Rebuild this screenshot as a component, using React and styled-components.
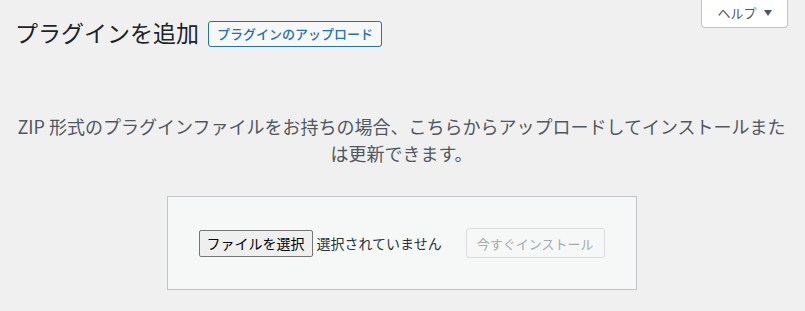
import styled, { createGlobalStyle } from 'styled-components';

const GlobalStyle = createGlobalStyle`
  html, body {
    margin: 0;
    padding: 0;
    background: #f0f0f1;
  }
  body {
    font-family: 'Noto Sans CJK JP', 'Noto Sans', sans-serif;
    color: #3c434a;
  }
`;

const Page = styled.div`
  width: 805px;
  height: 311px;
  overflow: hidden;
  box-sizing: border-box;
  padding: 0 17px 0 15px;
`;

const HelpTab = styled.button`
  float: right;
  width: 87px;
  height: 29px;
  margin-top: -1px;
  background: #fff;
  border: 1px solid #c3c4c7;
  border-top: none;
  border-radius: 0 0 4px 4px;
  font-family: inherit;
  font-size: 13px;
  color: #50575e;
  display: flex;
  align-items: center;
  justify-content: center;
  gap: 7px;
  padding: 0 0 2px;
  cursor: pointer;
`;

const Caret = styled.span`
  width: 0;
  height: 0;
  border-left: 4px solid transparent;
  border-right: 4px solid transparent;
  border-top: 6px solid #50575e;
  margin-top: 1px;
`;

const Header = styled.div`
  display: flex;
  align-items: center;
  gap: 9px;
  padding-top: 17px;
`;

const Title = styled.h1`
  margin: 0;
  font-size: 23px;
  font-weight: 400;
  line-height: 30px;
  color: #1d2327;
`;

const ActionButton = styled.button`
  height: 26px;
  margin-top: 3px;
  padding: 0 8px;
  border: 1px solid #2271b1;
  border-radius: 3px;
  background: #f6f7f7;
  color: #2271b1;
  font-family: inherit;
  font-size: 13px;
  font-weight: 500;
  cursor: pointer;
`;

const Help = styled.p`
  clear: both;
  margin: 66px 0 0;
  padding: 0;
  font-size: 18px;
  line-height: 27px;
  color: #50575e;
  text-align: center;
`;

const UploadForm = styled.form`
  width: 470px;
  box-sizing: border-box;
  margin: 29px auto 0;
  padding: 31px;
  border: 1px solid #c3c4c7;
  background: #f6f7f7;
  display: flex;
  align-items: center;
`;

const FileButton = styled.button`
  height: 27px;
  padding: 0 7px;
  border: 1px solid #767676;
  border-radius: 2px;
  background: #efefef;
  color: #000;
  font-family: inherit;
  font-size: 14px;
  line-height: 1;
  cursor: pointer;
`;

const FileName = styled.span`
  margin-left: 4px;
  font-size: 14px;
  color: #2c3338;
  flex: 1;
`;

const InstallButton = styled.button`
  height: 30px;
  padding: 0 10px;
  border: 1px solid #dcdcde;
  border-radius: 3px;
  background: #f6f7f7;
  color: #a7aaad;
  font-family: inherit;
  font-size: 13px;
  cursor: default;
`;

function App() {
  return (
    <Page>
      <GlobalStyle />
      <HelpTab type="button">
        ヘルプ <Caret />
      </HelpTab>
      <Header>
        <Title>プラグインを追加</Title>
        <ActionButton type="button">プラグインのアップロード</ActionButton>
      </Header>
      <Help>
        ZIP 形式のプラグインファイルをお持ちの場合、こちらからアップロードしてインストールまたは更新できます。
      </Help>
      <UploadForm onSubmit={e => e.preventDefault()}>
        <FileButton type="button">ファイルを選択</FileButton>
        <FileName>選択されていません</FileName>
        <InstallButton type="submit" disabled>今すぐインストール</InstallButton>
      </UploadForm>
    </Page>
  );
}

export default App;
